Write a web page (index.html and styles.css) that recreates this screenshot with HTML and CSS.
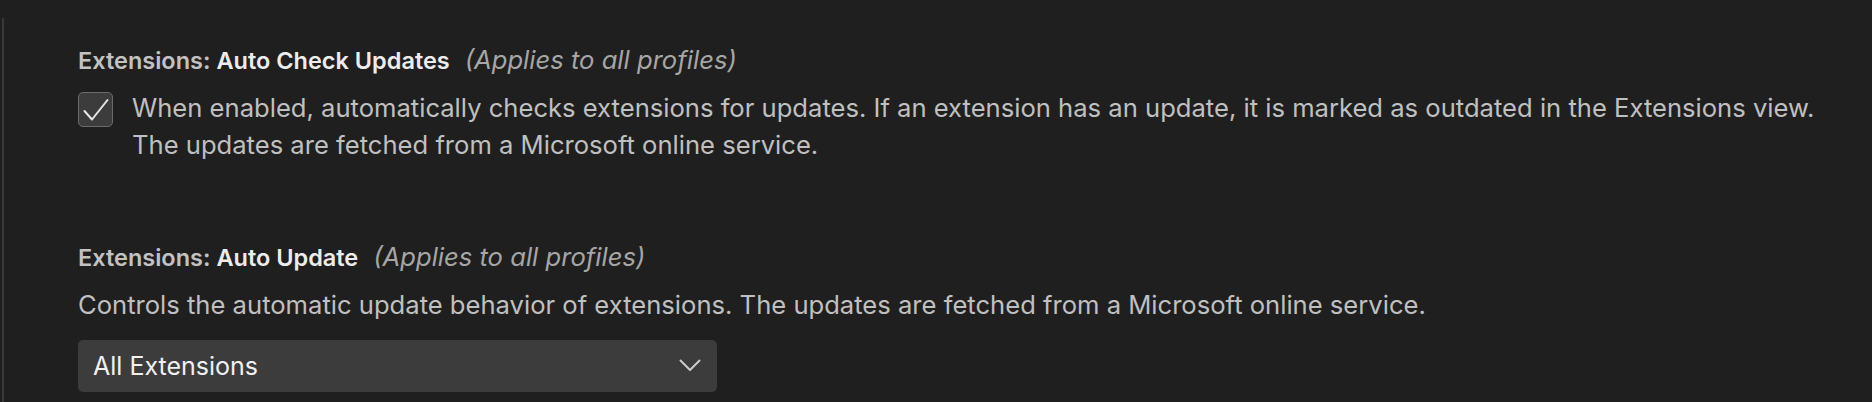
FILE: index.html
```html
<!DOCTYPE html>
<html>
<head>
<meta charset="utf-8">
<link rel="stylesheet" href="styles.css">
</head>
<body>
<div class="pane">
  <div class="setting">
    <div class="title">
      <span class="category">Extensions: </span><span class="label">Auto Check Updates</span><span class="scope">(Applies to all profiles)</span>
    </div>
    <div class="bool-row">
      <div class="checkbox">
        <svg width="35" height="35" viewBox="0 0 35 35"><path d="M6.5 19 L14 27.5 L29.5 8" fill="none" stroke="#e6e6e6" stroke-width="2" stroke-linecap="round" stroke-linejoin="round"/></svg>
      </div>
      <div class="desc">When enabled, automatically checks extensions for updates. If an extension has an update, it is marked as outdated in the Extensions view.<br>The updates are fetched from a Microsoft online service.</div>
    </div>
  </div>
  <div class="setting second">
    <div class="title">
      <span class="category">Extensions: </span><span class="label">Auto Update</span><span class="scope">(Applies to all profiles)</span>
    </div>
    <div class="desc plain">Controls the automatic update behavior of extensions. The updates are fetched from a Microsoft online service.</div>
    <div class="select">
      <span class="select-text">All Extensions</span>
      <svg class="chev" width="22" height="13" viewBox="0 0 22 13"><path d="M1.5 1.5 L11 11 L20.5 1.5" fill="none" stroke="#cccccc" stroke-width="2" stroke-linecap="round" stroke-linejoin="round"/></svg>
    </div>
  </div>
</div>
</body>
</html>
```
FILE: styles.css
```css
html, body {
  margin: 0;
  padding: 0;
  background: #1f1f1f;
  height: 100%;
  overflow: hidden;
}
body {
  font-family: Inter, "Noto Sans", sans-serif;
  font-size: 25.6px;
  line-height: 35px;
  color: #c2c2c2;
}
.pane {
  margin-left: 2px;
  margin-top: 18px;
  border-left: 2px solid #393939;
  padding-left: 74px;
  padding-top: 24px;
  height: 400px;
  box-sizing: border-box;
}
.title {
  white-space: nowrap;
  font-weight: 600;
  font-size: 23.5px;
  line-height: 35px;
}
.category {
  color: #c2c2c2;
}
.label {
  color: #ececec;
}
.scope {
  font-style: italic;
  font-weight: 400;
  font-size: 25.6px;
  color: #a6a6a6;
  margin-left: 15px;
}
.bool-row {
  display: flex;
  gap: 19px;
  margin-top: 11px;
}
.checkbox {
  flex: none;
  width: 35px;
  height: 35px;
  box-sizing: border-box;
  border: 1.5px solid #6b6b6b;
  border-radius: 5px;
  background: #3c3c3c;
  display: flex;
  align-items: center;
  justify-content: center;
  margin-top: 2.5px;
}
.checkbox svg {
  display: block;
  margin: -1.5px;
}
.desc {
  color: #c0c0c0;
  white-space: nowrap;
  line-height: 37px;
}
.second {
  margin-top: 75.5px;
}
.desc.plain {
  margin-top: 11px;
}
.select {
  margin-top: 17px;
  width: 639px;
  height: 52px;
  box-sizing: border-box;
  background: #3c3c3c;
  border-radius: 5px;
  display: flex;
  align-items: center;
  justify-content: space-between;
  padding-left: 15px;
  padding-right: 16px;
}
.select-text {
  color: #f0f0f0;
  font-size: 25px;
  line-height: 52px;
}
.chev {
  display: block;
}
```
